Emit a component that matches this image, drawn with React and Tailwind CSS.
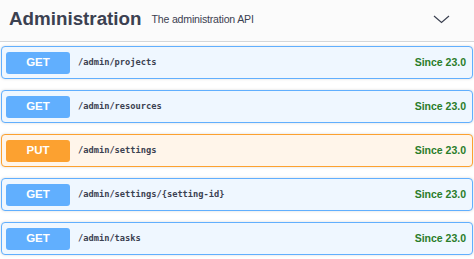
import React from "react";

const rows = [
  { m: "GET", p: "/admin/projects" },
  { m: "GET", p: "/admin/resources" },
  { m: "PUT", p: "/admin/settings" },
  { m: "GET", p: "/admin/settings/{setting-id}" },
  { m: "GET", p: "/admin/tasks" },
];

export default function App() {
  return (
    <div className="w-[474px] h-[259px] overflow-hidden bg-white" style={{ fontFamily: '"Liberation Sans", Arial, sans-serif' }}>
      <div className="flex items-center h-[42px] border-b border-[#d5d7da] bg-[#fbfbfb] pl-[9px] pr-[24px] pb-[2px]">
        <span className="text-[18.8px] font-bold text-[#3b4151] leading-none">Administration</span>
        <span className="ml-[10px] text-[10.6px] text-[#3b4151] tracking-[-0.2px] leading-none">The administration API</span>
        <svg className="ml-auto" width="17" height="9" viewBox="0 0 17 9" fill="none">
          <path d="M1 1 L8.5 7.5 L16 1" stroke="#3b4151" strokeWidth="1.2" />
        </svg>
      </div>
      <div className="flex flex-col gap-[11px] pt-[4px] px-[1px]">
        {rows.map((r, i) => {
          const put = r.m === "PUT";
          return (
            <div
              key={i}
              className={
                "flex items-center h-[33px] rounded-[4px] border pl-[4px] pr-[6px] shadow-[0_0_3px_rgba(0,0,0,0.15)] " +
                (put ? "bg-[#fff5ea] border-[#fca130]" : "bg-[#eff7ff] border-[#61affe]")
              }
            >
              <div
                className={
                  "w-[64px] h-[22px] rounded-[3px] flex items-center justify-center text-white font-bold text-[11.5px] " +
                  (put ? "bg-[#fca130]" : "bg-[#61affe]")
                }
              >
                {r.m}
              </div>
              <span className="ml-[8px] text-[8.7px] font-bold text-[#3b4151]" style={{ fontFamily: '"DejaVu Sans Mono", monospace' }}>
                {r.p}
              </span>
              <span className="ml-auto text-[10.5px] font-bold text-[#2a7d2a]">Since 23.0</span>
            </div>
          );
        })}
      </div>
    </div>
  );
}
